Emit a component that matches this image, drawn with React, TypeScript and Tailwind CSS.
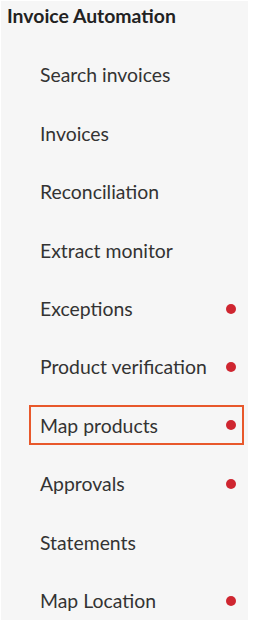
import React from 'react';

const items: { label: string; alert?: boolean; active?: boolean }[] = [
	{ label: "Search invoices" },
	{ label: "Invoices" },
	{ label: "Reconciliation" },
	{ label: "Extract monitor" },
	{ label: "Exceptions", alert: true },
	{ label: "Product verification", alert: true },
	{ label: "Map products", alert: true, active: true },
	{ label: "Approvals", alert: true },
	{ label: "Statements" },
	{ label: "Map Location", alert: true },
];

const App: React.FC = () => {
	return (
		<div className="w-[254px] h-[624px] bg-white" style={{ fontFamily: "Lato, 'Open Sans', sans-serif" }}>
			<div className="w-[247px] h-[619px] ml-px mt-px bg-[#f6f6f6] flex flex-col">
				<h2 className="pl-[6px] pt-[3px] text-[19.4px] leading-6 font-bold text-[#222]">
					Invoice Automation
				</h2>
				<ul className="mt-[27px] flex flex-col gap-[18.4px] pl-[28px] pr-[4px]">
					{items.map(item => (
						<li
							key={item.label}
							className={
								item.active
									? "h-10 flex items-center justify-between pl-[9px] pr-[6px] border-2 border-[#e8582b] text-[19.4px] text-[#333]"
									: "h-10 flex items-center justify-between pl-[11px] pr-[8px] text-[19.4px] text-[#333]"
							}
						>
							<span>{item.label}</span>
							{item.alert && <span className="w-[10px] h-[10px] rounded-full bg-[#cf2630]" />}
						</li>
					))}
				</ul>
			</div>
		</div>
	);
};

export default App;
